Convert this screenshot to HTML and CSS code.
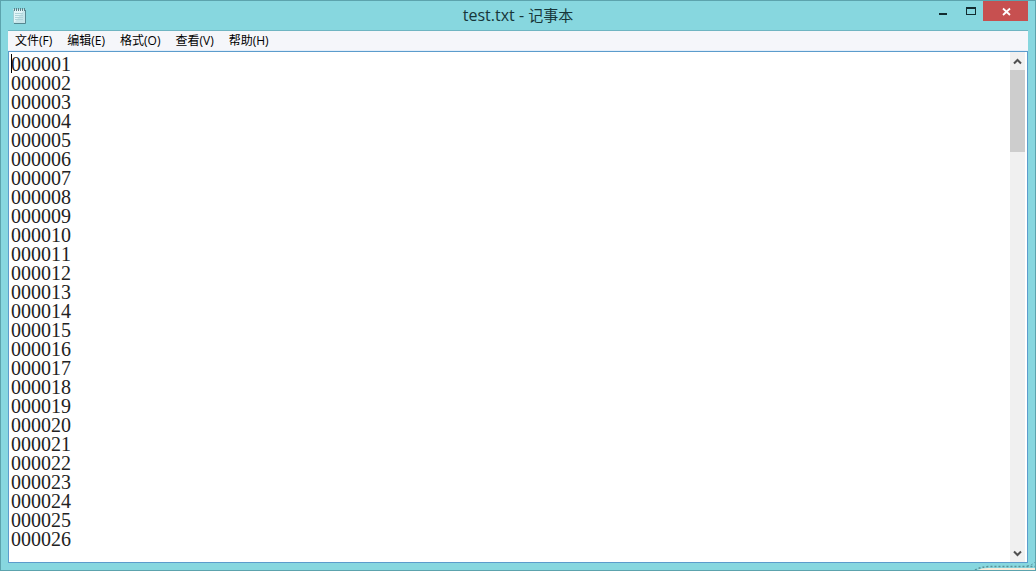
FILE: index.html
```html
<!DOCTYPE html>
<html lang="zh-CN">
<head>
<meta charset="utf-8">
<title>test.txt - 记事本</title>
<link rel="stylesheet" href="styles.css">
</head>
<body>
<div class="window">
  <header class="titlebar">
    <svg class="app-icon" width="18" height="18" viewBox="0 0 18 18" aria-hidden="true">
      <path d="M2 2h12v14H2z" fill="#c5e5ea"/>
      <path d="M3 3h10L4 15H3z" fill="#e2f5f8"/>
      <path d="M4 6.500h8M4 8.500h8M4 10.500h8M4 12.500h8" stroke="#b0d4da"/>
      <path d="M2.500 16V3" stroke="#a0cdd4"/>
      <path d="M14.500 3v13.500H3" fill="none" stroke="#558790"/>
      <path d="M3.500 1v3M5.500 1v3M7.500 1v3M9.500 1v3M11.500 1v3M13.500 1v3" stroke="#5d8087"/>
    </svg>
    <h1 class="title">test.txt - <span class="app-name">记事本</span></h1>
    <div class="controls">
      <button class="control" aria-label="最小化"><svg width="27" height="20" viewBox="0 0 27 20"><path d="M10 12h8v2h-8z" fill="#122c30"/></svg></button>
      <button class="control" aria-label="最大化"><svg width="27" height="20" viewBox="0 0 27 20"><path d="M10 6h10v8H10zM11 8v5h8V8z" fill="#122c30" fill-rule="evenodd"/></svg></button>
      <button class="control close" aria-label="关闭"><svg width="45" height="20" viewBox="0 0 45 20"><path d="M20 7.500l7 6.500M27 7.500l-7 6.500" stroke="#fff" stroke-width="1.800"/></svg></button>
    </div>
  </header>
  <main class="client">
    <nav class="menubar">
      <button class="menu">文件(F)</button>
      <button class="menu">编辑(E)</button>
      <button class="menu">格式(O)</button>
      <button class="menu">查看(V)</button>
      <button class="menu">帮助(H)</button>
    </nav>
    <div class="editor">
      <textarea class="text" aria-label="文本" spellcheck="false">000001
000002
000003
000004
000005
000006
000007
000008
000009
000010
000011
000012
000013
000014
000015
000016
000017
000018
000019
000020
000021
000022
000023
000024
000025
000026</textarea>
      <span class="caret"></span>
      <div class="scrollbar">
        <button class="arrow" aria-label="向上滚动"><svg width="9" height="7" viewBox="0 0 9 7"><path d="M1 5.500L4.500 2 8 5.500" fill="none" stroke="#505050" stroke-width="2"/></svg></button>
        <div class="track"><div class="thumb"></div></div>
        <button class="arrow" aria-label="向下滚动"><svg width="9" height="7" viewBox="0 0 9 7"><path d="M1 1.500L4.500 5 8 1.500" fill="none" stroke="#505050" stroke-width="2"/></svg></button>
      </div>
    </div>
  </main>
  <svg class="corner" width="62" height="10" viewBox="0 0 62 10" aria-hidden="true">
    <path d="M2 10Q6 7 14 7H62V10z" fill="#f8ead8"/>
    <path d="M1 9Q7 5.500 16 5.500H62" fill="none" stroke="#5a9299" stroke-width="1.500" stroke-dasharray="2 2"/>
    <path d="M53 5Q59 4 62 0" fill="none" stroke="#5a9ba5" stroke-dasharray="2 2"/>
  </svg>
</div>
</body>
</html>
```
FILE: styles.css
```css
* {
  box-sizing: border-box;
}

body {
  margin: 0;
  font-family: "Open Sans", "Noto Sans CJK SC", sans-serif;
}

button {
  border: 0;
  padding: 0;
  background: transparent;
  font: inherit;
  color: inherit;
}

svg {
  display: block;
}

.window {
  position: relative;
  display: flex;
  flex-direction: column;
  height: 100vh;
  padding: 0 7px 7px;
  border: 1px solid #5ca3ad;
  background: #87d7df;
  overflow: hidden;
}

.titlebar {
  display: grid;
  grid-template-columns: 99px 1fr 99px;
  height: 29px;
}

.app-icon {
  margin: 6px 0 0 3px;
}

.title {
  margin: 0;
  font-size: 16px;
  font-weight: 400;
  line-height: 29px;
  text-align: center;
  color: #17363a;
}

.app-name {
  font-size: 15px;
}

.controls {
  display: flex;
}

.control {
  height: 20px;
}

.close {
  background: #c75050;
}

.client {
  display: flex;
  flex: 1;
  flex-direction: column;
  min-height: 0;
  border-top: 1px solid #6fb5c2;
}

.menubar {
  display: flex;
  gap: 15px;
  height: 20px;
  padding: 0 7px;
  border-bottom: 1px solid #e3eefa;
  background: #f5f6fa;
  font-size: 12px;
  line-height: 19px;
  color: #000;
}

.editor {
  position: relative;
  display: flex;
  flex: 1;
  min-height: 0;
  padding-right: 2px;
  border: 1px solid #5c9ccc;
  background: #fff;
}

.text {
  flex: 1;
  min-width: 0;
  padding: 3px 2px 0;
  border: 0;
  outline: 0;
  resize: none;
  overflow: hidden;
  background: #fff;
  font: 20px/19px "Liberation Serif", "Noto Sans CJK SC", serif;
  font-kerning: none;
  color: #222;
}

.caret {
  position: absolute;
  top: 2px;
  left: 2px;
  width: 1px;
  height: 19px;
  background: #000;
}

.scrollbar {
  display: flex;
  flex-direction: column;
  width: 15px;
  background: #f0f0f0;
}

.arrow {
  display: grid;
  place-items: center;
  height: 18px;
}

.track {
  flex: 1;
}

.thumb {
  height: 82px;
  background: #cdcdcd;
}

.corner {
  position: absolute;
  right: -1px;
  bottom: -1px;
}
```
